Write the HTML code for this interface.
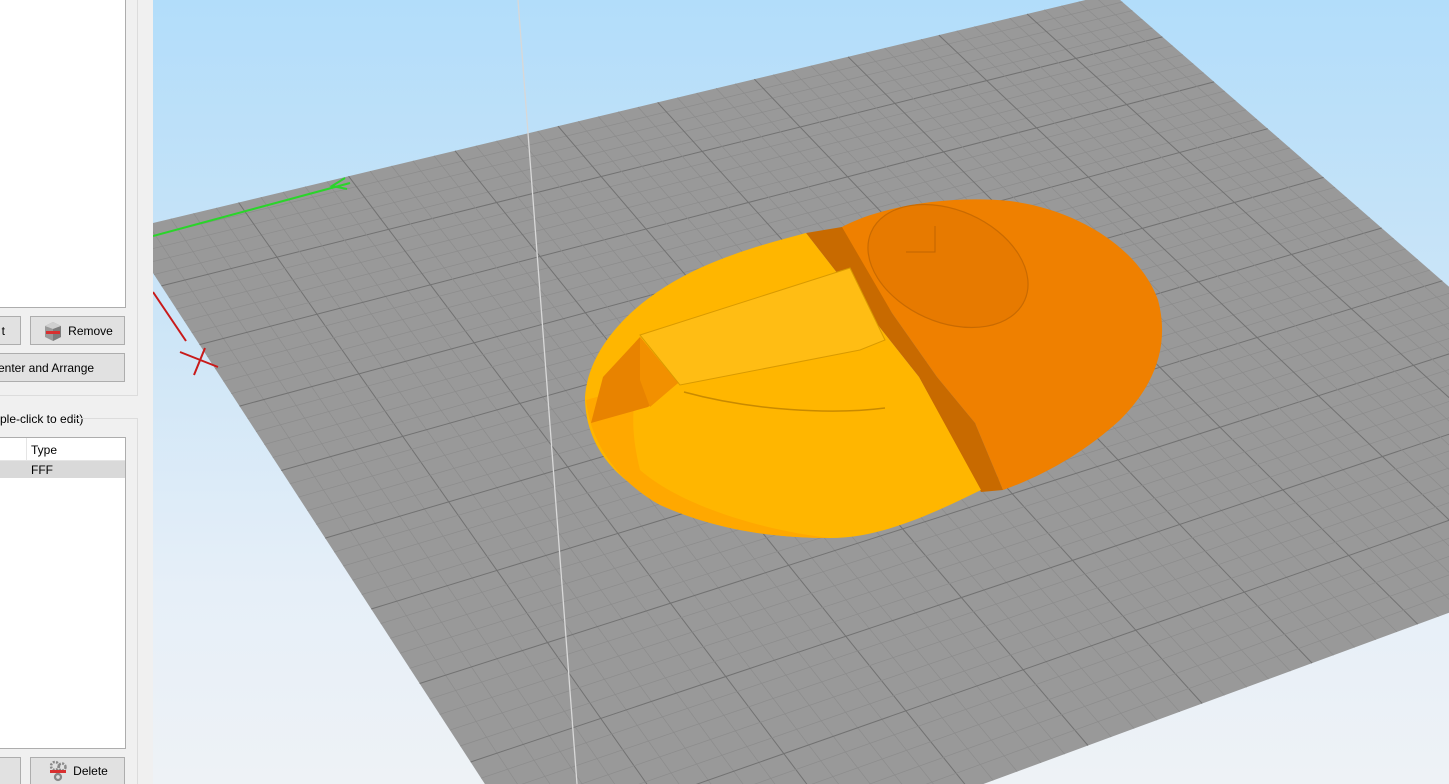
<!DOCTYPE html>
<html><head><meta charset="utf-8"><style>
html,body{margin:0;padding:0;width:1449px;height:784px;overflow:hidden;background:#f0f0f0;font-family:"Liberation Sans",sans-serif;font-size:12px;color:#000}
#panel{position:absolute;left:0;top:0;width:153px;height:784px;background:#f0f0f0;overflow:hidden}
.box{position:absolute;background:#fff;border:1px solid #adadad;box-sizing:border-box}
.btn{position:absolute;background:#e1e1e1;border:1px solid #adadad;box-sizing:border-box;display:flex;align-items:center;justify-content:center}
.gl{position:absolute;background:#dcdcdc}
#vp{position:absolute;left:153px;top:0;width:1296px;height:784px;overflow:hidden;background:linear-gradient(#b2ddfa 0%,#cfe6f7 45%,#e6eff8 75%,#eef2f6 100%)}
svg{position:absolute;left:0;top:0}
</style></head><body>
<div id="panel">
 <div class="box" style="left:-1px;top:-1px;width:127px;height:309px"></div>
 <div class="gl" style="left:137px;top:0;width:1px;height:396px"></div>
 <div class="gl" style="left:0;top:395px;width:138px;height:1px"></div>
 <div class="btn" style="left:-5px;top:316px;width:26px;height:29px;justify-content:flex-end;padding-right:15px">t</div>
 <div class="btn" style="left:30px;top:316px;width:95px;height:29px">
  <svg width="22" height="22" viewBox="0 0 22 22" style="position:static;margin-right:4px"><path d="M3 6 L11 2 L19 6 L19 17 L11 21 L3 17Z" fill="#9a9a9a"/><path d="M3 6 L11 9 L19 6 L11 2Z" fill="#cfcfcf"/><path d="M11 9 L19 6 L19 17 L11 21Z" fill="#7c7c7c"/><rect x="4" y="11" width="14" height="3" fill="#d83030"/></svg>Remove</div>
 <div class="btn" style="left:-10px;top:353px;width:135px;height:29px;justify-content:flex-start;padding-left:7px">enter and Arrange</div>
 <div style="position:absolute;left:0;top:412px;white-space:nowrap">ple-click to edit)</div>
 <div class="gl" style="left:74px;top:418px;width:64px;height:1px"></div>
 <div class="gl" style="left:137px;top:418px;width:1px;height:366px"></div>
 <div class="box" style="left:-1px;top:437px;width:127px;height:312px">
  <div style="position:absolute;left:0;top:0;width:125px;height:22px;border-bottom:1px solid #e5e5e5"></div>
  <div style="position:absolute;left:26px;top:0;width:1px;height:22px;background:#e5e5e5"></div>
  <div style="position:absolute;left:31px;top:5px">Type</div>
  <div style="position:absolute;left:0;top:23px;width:125px;height:17px;background:#d9d9d9"></div>
  <div style="position:absolute;left:31px;top:25px">FFF</div>
 </div>
 <div class="btn" style="left:-5px;top:757px;width:26px;height:27px;border-bottom:none"></div>
 <div class="btn" style="left:30px;top:757px;width:95px;height:27px;border-bottom:none">
  <svg width="22" height="22" viewBox="0 0 22 22" style="position:static;margin-right:4px"><circle cx="8" cy="6" r="4" fill="none" stroke="#888" stroke-width="2.5" stroke-dasharray="2 1.3"/><circle cx="15" cy="7" r="3.5" fill="none" stroke="#888" stroke-width="2.5" stroke-dasharray="2 1.3"/><rect x="3" y="10" width="16" height="3" fill="#d83030"/><circle cx="11" cy="17" r="3" fill="none" stroke="#888" stroke-width="2.3"/></svg>Delete</div>
</div>
<div id="vp">
<svg id="s" width="1296" height="784" viewBox="153 0 1296 784">
 <g id="grid"></g>
 <line x1="518" y1="0" x2="577" y2="784" stroke="#d8d8d8" stroke-width="1.3"/>
 <line x1="153" y1="236" x2="350" y2="183" stroke="#2ad52a" stroke-width="2"/>
 <path d="M345 178 L332 186 L347 189" fill="none" stroke="#2ad52a" stroke-width="2"/>
 <line x1="153" y1="292" x2="186" y2="341" stroke="#c81a1a" stroke-width="2"/>
 <path d="M180 352 L218 367 M205 348 L194 375" stroke="#c81a1a" stroke-width="2"/>
 <path d="M840 228 C880 206 950 195 1010 201 C1080 210 1140 250 1158 300 C1170 345 1155 385 1120 420 C1085 452 1045 475 1003 490 L975 423 L937 377 L892 313 Z" fill="#ef8000"/>
 <ellipse cx="948" cy="266" rx="84" ry="56" transform="rotate(24 948 266)" fill="#e77a00" stroke="#c96a00" stroke-width="1.2"/>
 <path d="M906 252 L935 252 L935 226" fill="none" stroke="#c06400" stroke-width="1"/>
 <path d="M806 233 L842 227 L892 313 L937 377 L975 423 L1003 490 L981 492 L919 377 L866 310 Z" fill="#c86a00"/>
 <path d="M806 233 L866 310 L919 377 L981 490 C930 515 880 538 830 538 C760 538 690 525 640 490 C600 465 585 430 585 397 C588 350 630 300 700 268 C740 250 780 240 806 233 Z" fill="#ffb600"/>
 <path d="M640 335 L850 268 L885 340 L860 350 L680 385 Z" fill="#ffbd14" stroke="#d99a00" stroke-width="1"/>
 <path d="M586 400 C590 440 615 480 660 505 C720 532 780 538 830 538 C760 530 680 505 640 470 C630 430 632 400 640 385 Z" fill="#ffa800"/>
 <path d="M591 423 L603 377 L640 337 L678 383 L648 407 Z" fill="#e88300"/>
 <path d="M640 337 L678 383 L650 407 L640 380 Z" fill="#f29000"/>
 <path d="M684 392 C750 410 830 415 885 408" fill="none" stroke="#c98a00" stroke-width="1.5"/>
</svg>
</div>
<script>
(function(){
var A=[124.9,229.7],B=[1112.7,-6.5],C=[1712,516],D=[581,932];
var x0=A[0],y0=A[1],x1=B[0],y1=B[1],x2=C[0],y2=C[1],x3=D[0],y3=D[1];
var sx=x0-x1+x2-x3,sy=y0-y1+y2-y3,dx1=x1-x2,dx2=x3-x2,dy1=y1-y2,dy2=y3-y2;
var den=dx1*dy2-dy1*dx2,g=(sx*dy2-sy*dx2)/den,h=(dx1*sy-dy1*sx)/den;
var a=x1-x0+g*x1,b=x3-x0+h*x3,c=x0,d=y1-y0+g*y1,e=y3-y0+h*y3,f=y0;
function P(u,v){var w=g*u+h*v+1;return [((a*u+b*v+c)/w).toFixed(1),((d*u+e*v+f)/w).toFixed(1)];}
var p0=P(0,0),p1=P(1,0),p2=P(1,1),p3=P(0,1);
var s='<polygon points="'+p0+' '+p1+' '+p2+' '+p3+'" fill="#999999"/>';
var N=50;
for(var i=1;i<N;i++){var t=i/N,maj=i%5==0;
 var st=maj?'stroke="#727272" stroke-width="1"':'stroke="#8c8c8c" stroke-width="0.7"';
 var q=P(t,0),r=P(t,1);
 s+='<line '+st+' x1="'+q[0]+'" y1="'+q[1]+'" x2="'+r[0]+'" y2="'+r[1]+'"/>';
 q=P(0,t);r=P(1,t);
 s+='<line '+st+' x1="'+q[0]+'" y1="'+q[1]+'" x2="'+r[0]+'" y2="'+r[1]+'"/>';
}
document.getElementById('grid').innerHTML=s;
})();
</script>
</body></html>
